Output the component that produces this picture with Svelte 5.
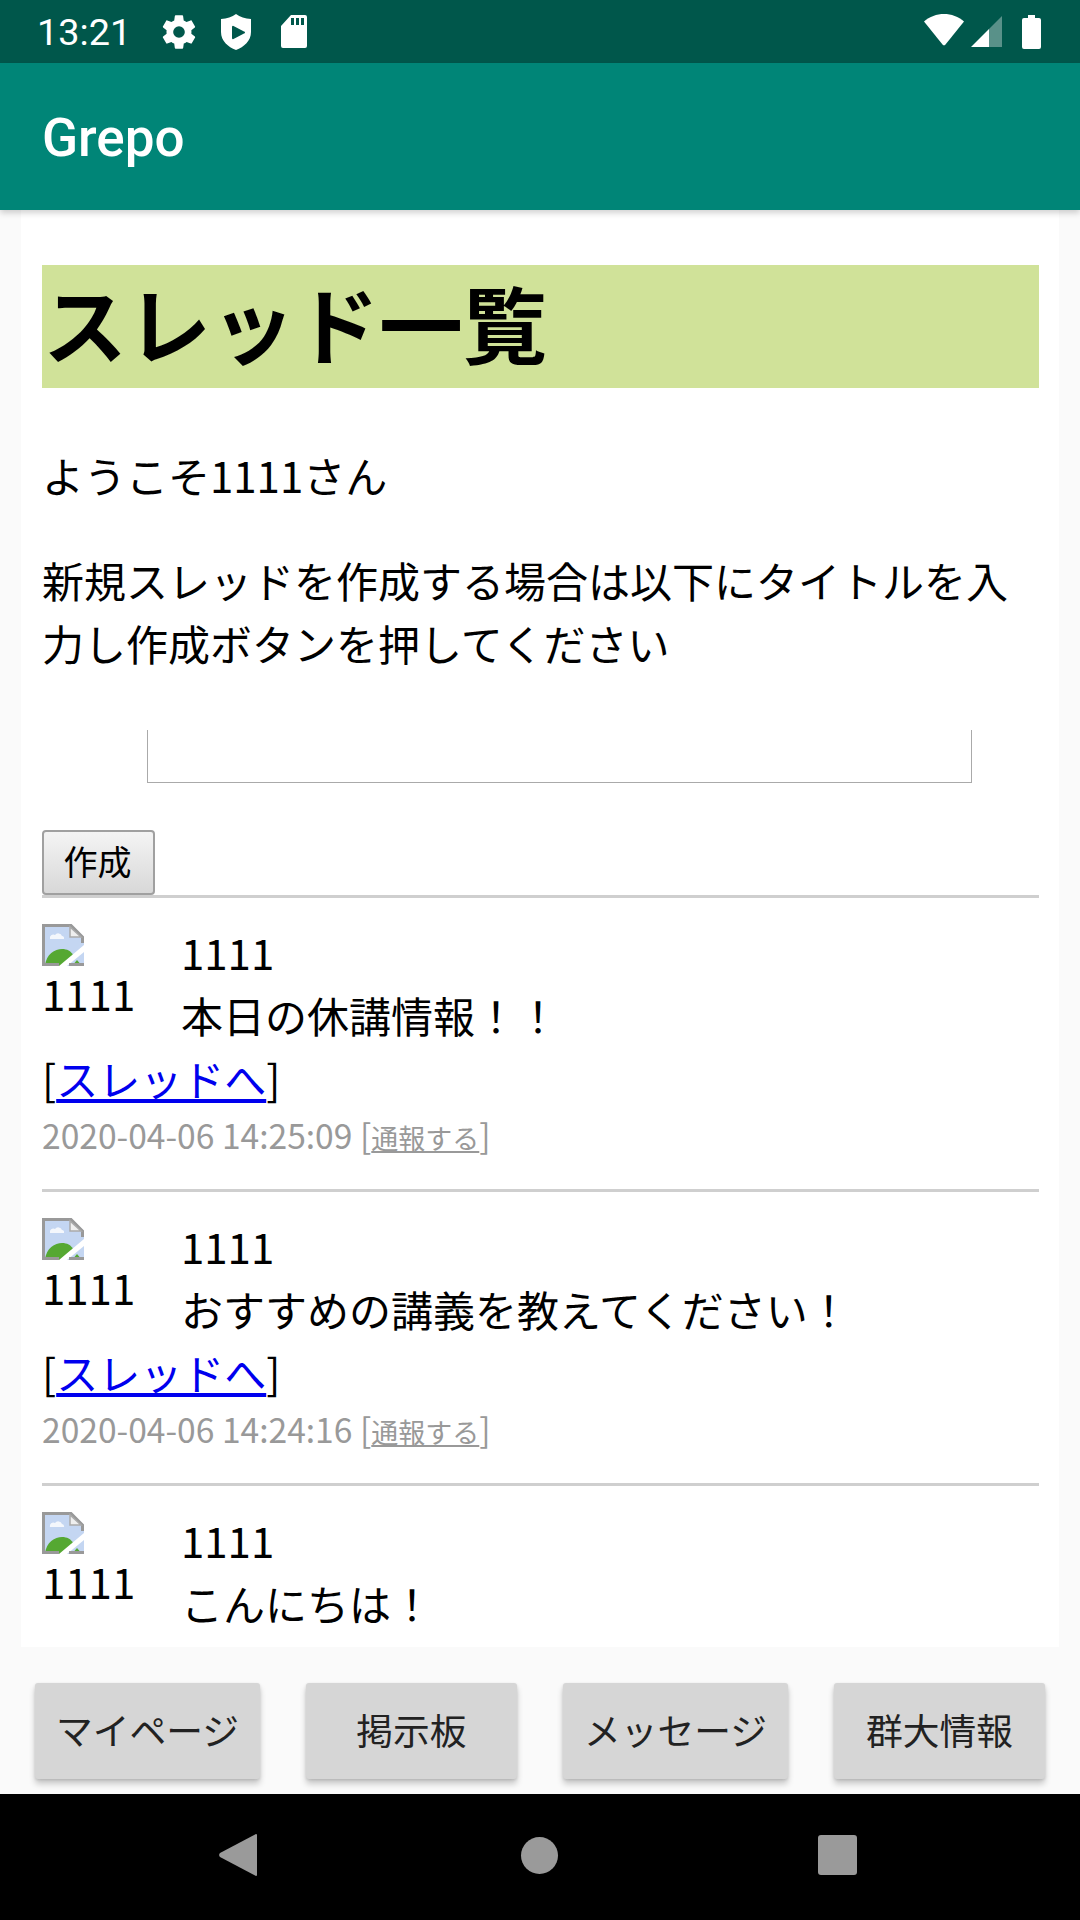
<script>
  const threads = [
    { title: '本日の休講情報！！', date: '2020-04-06 14:25:09' },
    { title: 'おすすめの講義を教えてください！', date: '2020-04-06 14:24:16' },
    { title: 'こんにちは！' }
  ];
  const tabs = ['マイページ', '掲示板', 'メッセージ', '群大情報'];
</script>

<div class="screen">
  <header class="status">
    <span class="time">13:21</span>
    <svg class="ic gear" viewBox="0 0 24 24"><path fill="#fff" d="M19.4 13c.04-.32.07-.66.07-1s-.03-.68-.07-1l2.1-1.65c.19-.15.24-.42.12-.64l-2-3.46c-.12-.22-.39-.3-.61-.22l-2.49 1a7.3 7.3 0 0 0-1.69-.98l-.38-2.65A.49.49 0 0 0 14 2h-4a.49.49 0 0 0-.49.42l-.38 2.65c-.61.25-1.17.59-1.69.98l-2.49-1c-.23-.09-.49 0-.61.22l-2 3.46c-.13.22-.07.49.12.64L4.57 11c-.04.32-.07.66-.07 1s.03.68.07 1l-2.11 1.65c-.19.15-.24.42-.12.64l2 3.46c.12.22.39.3.61.22l2.49-1c.52.4 1.08.73 1.69.98l.38 2.65c.03.24.24.42.49.42h4c.25 0 .46-.18.49-.42l.38-2.65c.61-.25 1.17-.59 1.69-.98l2.49 1c.23.09.49 0 .61-.22l2-3.46c.12-.22.07-.49-.12-.64L19.4 13zM12 15.5a3.5 3.5 0 1 1 0-7 3.5 3.5 0 0 1 0 7z"/></svg>
    <svg class="ic shield" viewBox="0 0 30 36"><path fill="#fff" fill-rule="evenodd" d="M15 0 C19 3 24 4.500 30 5 V18 C30 27 23 33 15 36 C7 33 0 27 0 18 V5 C6 4.500 11 3 15 0 Z M11 13 V24 a1 1 0 0 0 1.500 1 L23 19.500 a1 1 0 0 0 0 -2 L12.500 12 a1 1 0 0 0 -1.500 1 Z"/></svg>
    <svg class="ic sd" viewBox="0 0 26 33"><path fill="#fff" fill-rule="evenodd" d="M10 0 H24 a2 2 0 0 1 2 2 V31 a2 2 0 0 1 -2 2 H2 a2 2 0 0 1 -2 -2 V11 Z M10 3 V10 H13 V3 Z M15 3 V10 H18 V3 Z M20 3 V10 H23 V3 Z"/></svg>
    <span class="spacer"></span>
    <svg class="ic wifi" viewBox="0 0 40 32"><path fill="#fff" d="M0 7.500 C11-2.500 29-2.500 40 7.500 L21.500 30.500 a2 2 0 0 1 -3 0 Z"/></svg>
    <svg class="ic signal" viewBox="0 0 31 31"><path fill="#fff" fill-opacity=".35" d="M31 0 V31 H18 V13 Z"/><path fill="#fff" d="M18 13 V31 H0 Z"/></svg>
    <svg class="ic battery" viewBox="0 0 19 34"><path fill="#fff" d="M6 0 H13 V3 H17 a2 2 0 0 1 2 2 V32 a2 2 0 0 1 -2 2 H2 a2 2 0 0 1 -2 -2 V5 a2 2 0 0 1 2 -2 H6 Z"/></svg>
  </header>

  <div class="appbar">Grepo</div>

  <main class="page">
    <div class="web">
      <h1>スレッド一覧</h1>
      <p class="welcome">ようこそ1111さん</p>
      <p class="intro">新規スレッドを作成する場合は以下にタイトルを入力し作成ボタンを押してください</p>
      <div class="inputrow"><input type="text" aria-label="タイトル" /></div>
      <button class="create">作成</button>
      {#each threads as t}
        <section class="thread">
          <div class="row">
            <div class="avatar">
              <svg class="broken" viewBox="0 0 42 42">
                <path fill="#c4d6f2" d="M0 0 H29 L42 13 V42 H0 Z"/>
                <path fill="#f4f7fc" d="M8 15 a3.500 3.500 0 0 1 5 -4 a4 4 0 0 1 7 1 a2.500 2.500 0 0 1 2 3 Z"/>
                <path fill="#55a832" d="M3 42 C4 30 13 25 20 25 C25 25 29 27 31 31 L20 42 Z"/>
                <path fill="#55a832" d="M30 42 L35 36 L40 42 Z"/>
                <path fill="#fff" d="M17 42 L42 21 V28 L25 42 Z"/>
                <path fill="none" stroke="#999" stroke-width="3" d="M1.500 42 V1.500 H29 L40.500 13 V19"/>
                <path fill="#efefef" stroke="#aaa" stroke-width="1.500" d="M28 3 V13 H39 Z"/>
                <path fill="#999" d="M0 39 H17 V42 H0 Z M27 39 H42 V42 H27 Z"/>
              </svg>
              <span class="alt">1111</span>
            </div>
            <div class="body">
              <div>1111</div>
              <div>{t.title}</div>
            </div>
          </div>
          {#if t.date}
            <div class="linkline">[<a href="#thread">スレッドへ</a>]</div>
            <div class="meta">{t.date} [<a class="report" href="#report">通報する</a>]</div>
          {/if}
        </section>
      {/each}
    </div>
  </main>

  <nav class="tabs">
    {#each tabs as tab}
      <button class="tab">{tab}</button>
    {/each}
  </nav>

  <footer class="sysnav">
    <svg class="back" viewBox="0 0 38 42"><path fill="#9a9a9a" d="M37 0 a1 1 0 0 1 1 1 V41 a1 1 0 0 1 -1 1 L1 23 a3 3 0 0 1 0 -4 Z"/></svg>
    <span class="home"></span>
    <span class="recent"></span>
  </footer>
</div>

<style>
  :global(body) { margin: 0; }
  .screen {
    width: 1080px;
    height: 1920px;
    display: flex;
    flex-direction: column;
    overflow: hidden;
    background: #fafafa;
    font-family: "Noto Sans CJK JP", "Noto Sans", sans-serif;
    color: #000;
  }
  .status {
    height: 63px;
    flex: none;
    background: #00574b;
    display: flex;
    align-items: center;
    padding: 0 39px 0 37px;
    box-sizing: border-box;
    color: #fff;
    font: 400 37.8px Roboto, sans-serif;
  }
  .time { width: 88px; margin-right: 34px; }
  .ic { display: block; flex: none; }
  .gear { width: 40px; height: 40px; margin-right: 22px; }
  .shield { width: 30px; height: 36px; margin-right: 30px; }
  .sd { width: 26px; height: 33px; }
  .spacer { flex: 1; }
  .wifi { width: 40px; height: 32px; margin: -3px 7px 0 0; }
  .signal { width: 31px; height: 31px; margin-right: 20px; }
  .battery { width: 19px; height: 34px; }
  .appbar {
    height: 147px;
    flex: none;
    box-sizing: border-box;
    background: #008577;
    color: #fff;
    display: flex;
    align-items: center;
    padding: 2px 0 0 42px;
    font: 500 53px Roboto, sans-serif;
    box-shadow: 0 3px 6px rgba(0, 0, 0, .18);
    position: relative;
    z-index: 1;
  }
  .page {
    height: 1437px;
    flex: none;
    padding: 0 21px;
    box-sizing: border-box;
  }
  .web {
    height: 100%;
    overflow: hidden;
    background: #fff;
    padding: 55px 20px 0 21px;
    box-sizing: border-box;
    font-size: 42px;
  }
  h1 {
    margin: 0;
    background: #d0e299;
    font-size: 84px;
    font-weight: 700;
    line-height: 113px;
    padding: 0 0 10px 1px;
  }
  p { margin: 0; }
  .welcome { margin-top: 56px; line-height: 61px; }
  .intro { margin-top: 43px; line-height: 63px; }
  .inputrow { margin: 56px 0 0; padding-left: 105px; }
  input {
    display: block;
    width: 825px;
    height: 53px;
    box-sizing: border-box;
    border: 1px solid #aaa;
    border-top: none;
    background: #fff;
    padding: 0;
    margin: 0;
    outline: none;
  }
  .create {
    display: block;
    margin: 47px 0 0;
    width: 113px;
    height: 65px;
    padding: 0 2px 4px 0;
    box-sizing: border-box;
    border: 2px solid #a0a0a0;
    border-radius: 4px;
    background: linear-gradient(#f4f4f4, #d8d8d8);
    font: 400 34px "Noto Sans CJK JP", sans-serif;
    color: #000;
  }
  .thread {
    border-top: 3px solid #cfcfcf;
    height: 294px;
    box-sizing: border-box;
    padding-top: 26px;
  }
  .row { display: flex; }
  .avatar { width: 139px; flex: none; line-height: 61px; }
  .broken { width: 42px; height: 42px; display: block; }
  .alt { display: block; margin-top: -7px; line-height: 50px; padding-top: 9px; }
  .body { line-height: 63px; margin-top: -4px; }
  .linkline { line-height: 63px; margin-top: 0; }
  a { color: #0000ee; }
  .meta { color: #999; font-size: 33.6px; line-height: 48px; margin-top: 2px; }
  .meta .report { font-size: 27px; color: #999; }
  .tabs {
    height: 147px;
    flex: none;
    display: flex;
    justify-content: space-between;
    align-items: flex-start;
    padding: 36px 35px 0;
    box-sizing: border-box;
  }
  .tab {
    height: 96px;
    min-width: 211px;
    padding: 0 21px 4px;
    border: none;
    border-radius: 3px;
    background: #d6d6d6;
    color: #222;
    font: 400 36.75px "Noto Sans CJK JP", sans-serif;
    box-shadow: 0 5px 6px rgba(0, 0, 0, .2), 0 1px 3px rgba(0, 0, 0, .12);
  }
  .sysnav {
    height: 126px;
    flex: none;
    background: #000;
    display: flex;
    align-items: center;
    padding: 0 0 4px 219px;
    box-sizing: border-box;
  }
  .back { width: 38px; height: 42px; display: block; margin-right: 264px; }
  .home { width: 37px; height: 37px; border-radius: 50%; background: #9a9a9a; margin-right: 260px; }
  .recent { width: 39px; height: 40px; border-radius: 3px; background: #9a9a9a; }
</style>
